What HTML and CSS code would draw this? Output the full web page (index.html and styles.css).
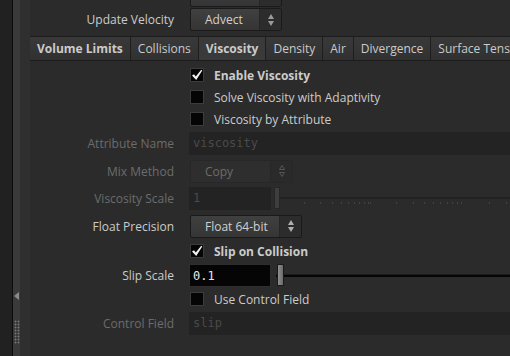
FILE: index.html
```html
<!DOCTYPE html>
<html>
<head>
  <meta charset="UTF-8">
  <title>Viscosity</title>
  <link rel="stylesheet" href="styles.css">
</head>
<body>
  <div class="app">
    <div class="side">
      <div class="side-dark"></div>
      <div class="side-line"></div>
      <div class="side-strip">
        <div class="side-arrow"></div>
        <div class="grip"></div>
      </div>
      <div class="side-gap"></div>
    </div>
    <div class="main">
      <div class="top">
        <div class="row top-prev">
          <div class="label"></div>
          <div class="menu"><span class="menu-text"></span><span class="menu-arrow"></span></div>
        </div>
        <div class="row">
          <div class="label">Update Velocity</div>
          <div class="menu"><span class="menu-text">Advect</span><span class="menu-arrow"><svg width="8" height="14" viewBox="0 0 8 14"><path d="M4 1 L7 6 L1 6 Z M4 13 L7 8 L1 8 Z" fill="#9a9a9a"/></svg></span></div>
        </div>
      </div>
      <div class="tabs">
        <div class="tab bold">Volume Limits</div>
        <div class="tab">Collisions</div>
        <div class="tab bold active">Viscosity</div>
        <div class="tab">Density</div>
        <div class="tab">Air</div>
        <div class="tab">Divergence</div>
        <div class="tab">Surface Tension</div>
      </div>
      <div class="panel">
        <div class="row check-row">
          <div class="label"></div>
          <div class="check on"><svg width="12" height="12" viewBox="0 0 12 12"><path d="M1 6.5 L3 5.3 L4.8 7.6 L10.2 0.8 L11.3 1.6 L5.2 11 Z" fill="#f2f2f2"/></svg></div>
          <div class="check-text bold">Enable Viscosity</div>
        </div>
        <div class="row check-row">
          <div class="label"></div>
          <div class="check"></div>
          <div class="check-text">Solve Viscosity with Adaptivity</div>
        </div>
        <div class="row check-row">
          <div class="label"></div>
          <div class="check"></div>
          <div class="check-text">Viscosity by Attribute</div>
        </div>
        <div class="row field-row">
          <div class="label dim">Attribute Name</div>
          <div class="field wide dim">viscosity</div>
        </div>
        <div class="row field-row next">
          <div class="label dim">Mix Method</div>
          <div class="menu off"><span class="menu-text">Copy</span><span class="menu-arrow"><svg width="8" height="14" viewBox="0 0 8 14"><path d="M4 1.5 L6.5 5.5 L1.5 5.5 Z M4 12.5 L6.5 8.5 L1.5 8.5 Z" fill="none" stroke="#555" stroke-width="1"/></svg></span></div>
        </div>
        <div class="row field-row near">
          <div class="label dim">Viscosity Scale</div>
          <div class="field num dim">1</div>
          <div class="slider off">
            <div class="track"></div>
            <div class="ticks">
              <i style="left:33px"></i><i style="left:49px"></i><i style="left:61px"></i><i style="left:70px"></i><i style="left:77px"></i><i style="left:83px"></i><i style="left:88px"></i><i style="left:93px"></i><i style="left:97px"></i><i style="left:99px"></i>
              <i style="left:125px"></i><i style="left:142px"></i><i style="left:153px"></i><i style="left:162px"></i><i style="left:169px"></i><i style="left:176px"></i><i style="left:181px"></i><i style="left:186px"></i><i style="left:190px"></i>
              <i style="left:218px"></i><i style="left:235px"></i>
            </div>
            <div class="handle"></div>
          </div>
        </div>
        <div class="row field-row next">
          <div class="label">Float Precision</div>
          <div class="menu fp"><span class="menu-text">Float 64-bit</span><span class="menu-arrow"><svg width="8" height="14" viewBox="0 0 8 14"><path d="M4 1 L7 6 L1 6 Z M4 13 L7 8 L1 8 Z" fill="#b0b0b0"/></svg></span></div>
        </div>
        <div class="row check-row after-menu">
          <div class="label"></div>
          <div class="check on"><svg width="12" height="12" viewBox="0 0 12 12"><path d="M1 6.5 L3 5.3 L4.8 7.6 L10.2 0.8 L11.3 1.6 L5.2 11 Z" fill="#f2f2f2"/></svg></div>
          <div class="check-text bold">Slip on Collision</div>
        </div>
        <div class="row field-row">
          <div class="label">Slip Scale</div>
          <div class="field num on">0.1</div>
          <div class="slider">
            <div class="track"></div>
            <div class="handle"></div>
          </div>
        </div>
        <div class="row check-row">
          <div class="label"></div>
          <div class="check"></div>
          <div class="check-text">Use Control Field</div>
        </div>
        <div class="row field-row">
          <div class="label dim">Control Field</div>
          <div class="field wide dim">slip</div>
        </div>
      </div>
    </div>
  </div>
</body>
</html>
```

FILE: styles.css
```css
/* general */
body {
  margin: 0;
  background: #2b2b2b;
  font-family: "Source Sans Pro", "Open Sans", sans-serif;
  font-size: 12px;
  color: #cbcbcb;
  overflow: hidden;
}
.app {
  display: flex;
  height: 356px;
}
.bold {
  font-weight: bold;
}

/* left strip */
.side {
  display: flex;
  flex-shrink: 0;
}
.side-dark {
  width: 12px;
  background: #212121;
}
.side-line {
  width: 1px;
  background: #0c0c0c;
}
.side-strip {
  width: 7px;
  background: #3a3a3a;
  position: relative;
}
.side-arrow {
  position: absolute;
  left: 1px;
  top: 292px;
  width: 0;
  height: 0;
  border-top: 4px solid transparent;
  border-bottom: 4px solid transparent;
  border-right: 5px solid #8a8a8a;
}
.grip {
  position: absolute;
  left: 1px;
  top: 320px;
  width: 6px;
  height: 24px;
  background-image: radial-gradient(#7a7a7a 0.8px, transparent 1.1px);
  background-size: 3px 3px;
}
.side-gap {
  width: 10px;
  background: #2f2f2f;
}

/* main column */
.main {
  flex: 1;
  display: flex;
  flex-direction: column;
  min-width: 0;
}
.top {
  display: flex;
  flex-direction: column;
  gap: 1px;
  margin-top: -16px;
  padding-bottom: 5px;
}
.row {
  display: flex;
  align-items: center;
}
.label {
  width: 144px;
  padding-right: 16px;
  text-align: right;
  flex-shrink: 0;
}
.dim {
  color: #6c6c6c;
}

/* menus */
.menu {
  display: flex;
  height: 21px;
  width: 90px;
  border: 1px solid #1a1a1a;
  border-radius: 2px;
  background: linear-gradient(#404040, #353535);
}
.menu-text {
  flex: 1;
  padding-left: 14px;
  line-height: 21px;
  color: #d0d0d0;
}
.menu-arrow {
  width: 21px;
  display: flex;
  align-items: center;
  justify-content: center;
  background: #2c2c2c;
  border-left: 1px solid #262626;
}
.menu.fp {
  width: 110px;
}
.menu.off {
  width: 101px;
  border-color: #272727;
  background: #2e2e2e;
}
.menu.off .menu-text {
  color: #6c6c6c;
}
.menu.off .menu-arrow {
  background: #2a2a2a;
  border-left-color: #272727;
}

/* tabs */
.tabs {
  display: flex;
  height: 23px;
  background: #353535;
  border-top: 1px solid #1c1c1c;
  border-bottom: 1px solid #1c1c1c;
  white-space: nowrap;
  overflow: hidden;
}
.tab {
  padding: 0 7px;
  line-height: 23px;
  border-right: 1px solid #1e1e1e;
  background: linear-gradient(#393939, #313131);
}
.tab.active {
  background: #3a3a3a;
}

/* panel rows */
.panel {
  flex: 1;
  display: flex;
  flex-direction: column;
  padding-top: 3px;
}
.check-row {
  height: 22px;
}
.field-row {
  height: 26px;
}
.field-row.next {
  margin-top: 2px;
}
.field-row.near {
  margin-top: 1px;
}
.check-row.after-menu {
  margin-top: 1px;
}
.check {
  width: 12px;
  height: 12px;
  border: 1px solid #3c3c3c;
  background: #050505;
  display: flex;
  align-items: center;
  justify-content: center;
}
.check-text {
  padding-left: 10px;
}
.field {
  height: 23px;
  line-height: 23px;
  padding-left: 4px;
  background: #232323;
  font-family: "DejaVu Sans Mono", monospace;
  font-size: 12px;
  box-sizing: border-box;
}
.field.wide {
  flex: 1;
  margin-left: -1px;
  color: #4a4a4a;
}
.field.num {
  width: 82px;
  margin-left: -1px;
  color: #4a4a4a;
}
.field.on {
  background: #050505;
  border: 1px solid #2e2e2e;
  color: #e8e8e8;
  padding-left: 3px;
}

/* sliders */
.slider {
  flex: 1;
  height: 24px;
  position: relative;
}
.track {
  position: absolute;
  left: 5px;
  right: 0;
  top: 11px;
  height: 2px;
  background: #050505;
  border-top: 1px solid #1c1c1c;
}
.slider.off .track {
  background: #222;
  border-top: none;
  height: 2px;
  top: 11px;
}
.handle {
  position: absolute;
  left: 6px;
  top: 1px;
  width: 5px;
  height: 20px;
  border: 1px solid #1a1a1a;
  background: linear-gradient(90deg, #8e8e8e, #6a6a6a);
}
.slider.off .handle {
  left: 3px;
  width: 4px;
  background: #3e3e3e;
  border-color: #262626;
}
.ticks i {
  position: absolute;
  top: 16px;
  width: 1px;
  height: 2px;
  background: #434343;
}
```
